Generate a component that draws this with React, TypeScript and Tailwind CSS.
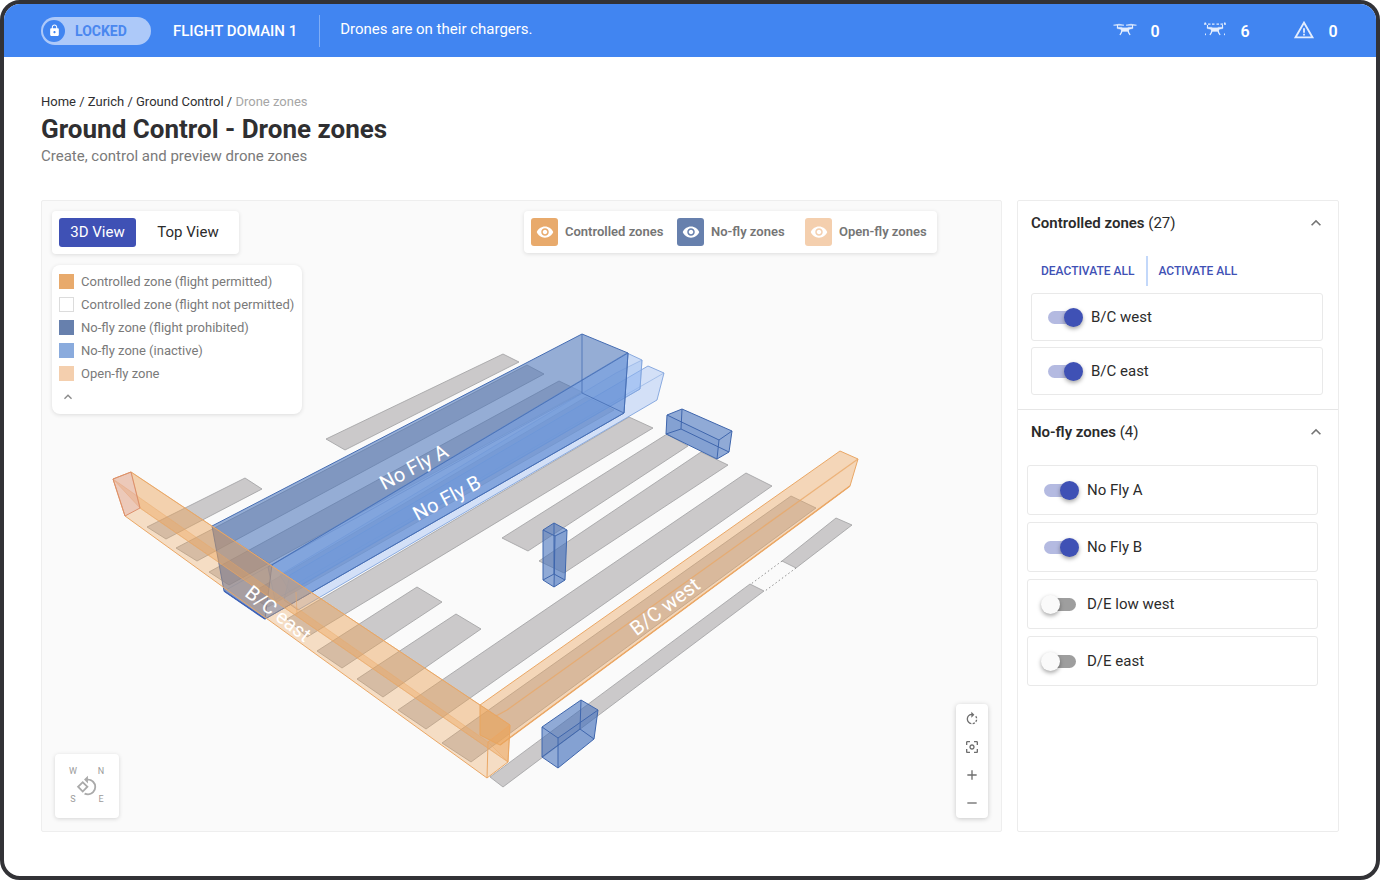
import { useState } from "react";
import type { ReactNode } from "react";
import {
  MdAdd,
  MdCenterFocusWeak,
  MdKeyboardArrowUp,
  MdLock,
  MdRemove,
  MdRotate90DegreesCcw,
  MdRotateRight,
  MdVisibility,
  MdWarningAmber,
} from "react-icons/md";

function DroneIcon({ flying = false }: { flying?: boolean }) {
  return (
    <svg viewBox="0 0 24 24" className="size-6" fill="#e3edfe" stroke="#e3edfe" aria-hidden="true">
      {flying ? (
        <path d="M1 6.200h2.500M5 6.200h2.500M9 6.200h2.500M13.500 6.200h2.500M17.500 6.200h2.500M21 6.200h2M1.500 5h1.500M21 5h1.500" fill="none" strokeWidth="1.200" />
      ) : (
        <path d="M.5 7.200L6 6.200l5 1zM13 7.200l5-1 5.500 1z" strokeWidth=".6" strokeLinejoin="round" />
      )}
      <path d="M4.500 7v3M19.500 7v3" fill="none" strokeWidth="1.100" />
      <path d="M4 9.200h4.500l1.200.6h4.600l1.200-.6H20v1.300l-3.500.8-1.600 2.200H9.100L7.500 11.300 4 10.500z" strokeWidth=".3" />
      <path d="M8.800 12.600l-.4 2-1.200 1.900M15.200 12.600l.4 2 1.200 1.900" fill="none" strokeWidth="1.400" strokeLinecap="round" />
      {flying && <path d="M2.500 15.500v1.700M21.500 15.500v1.700" fill="none" strokeWidth="1" />}
    </svg>
  );
}

function Stat({ icon, label, value }: { icon: ReactNode; label: string; value: number }) {
  return (
    <div className="flex items-center gap-3" title={label}>
      {icon}
      <span className="w-3 pt-1 text-center text-base leading-5 font-semibold">{value}</span>
    </div>
  );
}

function Header() {
  return (
    <header className="flex h-[53px] items-center bg-[#4185f1] px-[37px] text-white">
      <button type="button" className="flex h-7 w-[110px] items-center gap-2.5 rounded-full bg-[#adc9f9] px-0.5 text-sm font-bold text-[#4a87ef]">
        <span className="flex size-[22px] items-center justify-center rounded-full bg-[#4185f1] text-white">
          <MdLock className="size-[13px]" />
        </span>
        LOCKED
      </button>
      <span className="ml-[22px] border-r border-[#7fadf6] py-1.5 pr-[22px] text-[15px] leading-5 font-medium">
        FLIGHT DOMAIN 1
      </span>
      <p className="ml-5 pb-0.5 text-[15px]">Drones are on their chargers.</p>
      <div className="ml-auto flex gap-[42px] pb-0.5">
        <Stat icon={<DroneIcon />} label="Drones in standby" value={0} />
        <Stat icon={<DroneIcon flying />} label="Drones in flight" value={6} />
        <Stat icon={<MdWarningAmber className="size-[22px] text-[#e3edfe]" />} label="Warnings" value={0} />
      </div>
    </header>
  );
}

const slabs = [
  "326,439 503,354 519,362 345,450",
  "147,527 245,478 262,489 166,539",
  "176,548 527,365 544,374 197,561",
  "209,572 559,381 582,392 229,585",
  "248,595 586,397 614,410 268,607",
  "287,619 629,417 653,428 307,637",
  "502,538 667,434 688,446 528,551",
  "539,561 701,452 728,465 564,573",
  "398,710 746,473 772,486 426,729",
  "442,743 791,496 816,508 471,762",
  "782,561 836,518 852,525 796,568",
  "490,777 750,584 764,591 503,787",
  "317,651 417,587 442,602 342,668",
  "357,679 456,614 481,629 383,697",
];

const smallBoxes = [
  {
    hull: "682,409 732,431 729,452 717,459 666,434 667,415",
    lines: "M667 415L719 440L732 431M719 440L717 459M682 409L681 429L729 452M681 429L666 434",
    shade: "667,415 719,440 717,459 666,434",
  },
  {
    hull: "554,523 567,530 565,580 554,587 543,580 543,530",
    lines: "M543 530L555 536L567 530M555 536L554 587M554 523V574L565 580M554 574L543 580",
    shade: "555,536 567,530 565,580 554,587",
  },
  {
    hull: "581,700 598,710 594,739 558,768 542,757 542,727",
    lines: "M542 727L558 738L598 710M558 738V768M581 700L580 729L594 739M580 729L542 757",
    shade: "558,738 598,710 594,739 558,768",
  },
];

function ZoneMap() {
  return (
    <svg viewBox="42 201 959 630" className="block h-auto w-full" role="img" aria-label="3D map of the drone zones">
      <g fill="#cbc9ca" stroke="#a09fa1" strokeWidth=".8">
        {slabs.map((points) => (
          <polygon key={points} points={points} />
        ))}
      </g>
      <path d="M782 561L751 584M796 568L765 591" stroke="#8f8f8f" strokeDasharray="1.500 2.500" />

      {/* No Fly B */}
      <g stroke="#7fa3dd" strokeWidth=".9" fill="#8db2f0">
        <polygon points="648,366 664,373 657,400 298,610 284,600 290,575" fillOpacity=".36" />
        <path d="M664 373L296 584" fill="none" strokeOpacity=".6" />
        <polygon points="627,353 642,360 640,389 275,600 268,567" fillOpacity=".42" />
        <polygon points="616,373 642,360 640,389 290,592 280,575" fillOpacity=".25" strokeWidth=".5" />
      </g>

      {/* No Fly A */}
      <g stroke="#456db3" strokeWidth="1">
        <polygon points="212,526 582,334 628,353 624,413 265,619 224,591" fill="#4670b8" fillOpacity=".56" />
        <polygon points="272,565 628,353 624,413 265,619" fill="#86b0f2" fillOpacity=".32" strokeOpacity=".8" />
        <polygon points="212,526 272,565 265,619 224,591" fill="#4b5c8c" fillOpacity=".22" stroke="none" />
        <path d="M582 334V393L624 413" fill="none" strokeOpacity=".8" />
        <path d="M582 393L224 591" fill="none" strokeOpacity=".25" />
        <path d="M224 591L265 619" stroke="#3e62b8" strokeWidth="1.500" />
      </g>

      {smallBoxes.map((box) => (
        <g key={box.hull} stroke="#3f66ad" strokeWidth="1" fill="#4470bb">
          <polygon points={box.hull} fillOpacity=".58" />
          <polygon points={box.shade} fillOpacity=".15" stroke="none" />
          <path d={box.lines} fill="none" />
        </g>
      ))}

      {/* B/C west */}
      <g stroke="#eaa765" strokeWidth="1" fill="#eba45c">
        <polygon points="480,705 840,451 858,459 850,486 500,745 480,735" fillOpacity=".42" />
        <path d="M858 459L507 710L496 716" fill="none" strokeWidth="1.300" strokeOpacity=".75" />
        <path d="M850 486L500 745" fill="none" strokeWidth="1.500" />
        <polygon points="480,705 498,716 510,725 508,737 497,745 480,735" fillOpacity=".28" stroke="none" />
      </g>

      {/* B/C east */}
      <g stroke="#eaa765" strokeWidth="1" fill="#eba45c">
        <polygon points="113,479 131,472 510,725 508,762 487,778 125,516" fillOpacity=".34" />
        <polygon points="131,472 510,725 508,762 140,508" fillOpacity=".2" strokeOpacity=".5" />
        <polygon points="113,479 488,742 508,762 140,508" fillOpacity=".32" strokeOpacity=".4" />
        <polygon points="488,742 510,725 508,762" fillOpacity=".4" stroke="none" />
        <path d="M488 742L487 778M488 742L510 725" fill="none" />
        <path d="M296 592L297 615" fill="none" strokeOpacity=".6" />
        <polygon points="113,479 131,472 140,508 125,516" fill="#d58f9c" fillOpacity=".26" stroke="#dc8f6c" />
      </g>

      <g fill="#fff" fontSize="20" textAnchor="middle" className="font-['Roboto',sans-serif]">
        <text transform="translate(417 473) rotate(-28)">No Fly A</text>
        <text transform="translate(450 504) rotate(-28)">No Fly B</text>
        <text transform="translate(274 619) rotate(38)">B/C east</text>
        <text transform="translate(669 612) rotate(-37)">B/C west</text>
      </g>
    </svg>
  );
}

function ViewSwitch() {
  const [view, setView] = useState("3D View");
  return (
    <div className="flex gap-2 rounded-sm bg-white p-[7px] shadow-[0_1px_4px_rgba(0,0,0,0.12)]">
      {["3D View", "Top View"].map((name) => (
        <button
          key={name}
          type="button"
          aria-pressed={view === name}
          onClick={() => setView(name)}
          className={
            view === name
              ? "h-[29px] w-[77px] rounded-[3px] bg-[#3f51b5] text-[15px] text-white"
              : "h-[29px] w-[88px] rounded-[3px] text-[15px] text-[#2b2b2b]"
          }
        >
          {name}
        </button>
      ))}
    </div>
  );
}

const legend = [
  { label: "Controlled zone (flight permitted)", swatch: "bg-[#e8aa6c]" },
  { label: "Controlled zone (flight not permitted)", swatch: "border border-[#dcdcdc] bg-white" },
  { label: "No-fly zone (flight prohibited)", swatch: "bg-[#6780ad]" },
  { label: "No-fly zone (inactive)", swatch: "bg-[#8aabdd]" },
  { label: "Open-fly zone", swatch: "bg-[#f4cfae]" },
];

function Legend() {
  return (
    <div className="w-[250px] rounded-lg bg-white px-[7px] pt-[5px] pb-[7px] shadow-[0_1px_4px_rgba(0,0,0,0.12)]">
      <ul className="text-[13px] text-[#7a7a7a]">
        {legend.map(({ label, swatch }) => (
          <li key={label} className="flex h-[23px] items-center gap-[7px] whitespace-nowrap">
            <span className={`size-[15px] shrink-0 ${swatch}`} />
            {label}
          </li>
        ))}
      </ul>
      <button type="button" aria-label="Collapse legend" className="mt-0.5 ml-px flex h-5 items-center text-[#8a8a8a]">
        <MdKeyboardArrowUp className="size-4" />
      </button>
    </div>
  );
}

const filters = [
  { label: "Controlled zones", width: "w-[146px]", swatch: "bg-[#e8aa6c]" },
  { label: "No-fly zones", width: "w-[128px]", swatch: "bg-[#6780ad]" },
  { label: "Open-fly zones", width: "w-[125px]", swatch: "bg-[#f4cfae]" },
];

function ZoneFilters() {
  return (
    <div className="flex rounded-sm bg-white p-[7px] shadow-[0_1px_4px_rgba(0,0,0,0.12)]">
      {filters.map(({ label, width, swatch }) => (
        <button key={label} type="button" className={`flex items-center gap-[7px] text-[13px] font-semibold whitespace-nowrap text-[#757575] ${width}`}>
          <span className={`flex h-7 w-[27px] items-center justify-center rounded-[3px] text-white ${swatch}`}>
            <MdVisibility className="size-[18px]" />
          </span>
          {label}
        </button>
      ))}
    </div>
  );
}

const mapTools = [
  { label: "Rotate", Icon: MdRotateRight },
  { label: "Center", Icon: MdCenterFocusWeak },
  { label: "Zoom in", Icon: MdAdd },
  { label: "Zoom out", Icon: MdRemove },
];

function MapTools() {
  return (
    <div className="flex w-8 flex-col rounded-sm bg-white py-px shadow-[0_1px_5px_rgba(0,0,0,0.2)]">
      {mapTools.map(({ label, Icon }) => (
        <button key={label} type="button" aria-label={label} className="flex h-7 items-center justify-center text-[#6f6f6f]">
          <Icon className="size-4" />
        </button>
      ))}
    </div>
  );
}

function Compass() {
  return (
    <div className="grid size-16 grid-cols-3 grid-rows-3 place-items-center rounded-sm bg-white p-[11px] text-[9px] text-[#9b9b9b] shadow-[0_1px_4px_rgba(0,0,0,0.15)]">
      <span className="col-start-1 row-start-1">W</span>
      <span className="col-start-3 row-start-1">N</span>
      <MdRotate90DegreesCcw className="col-start-2 row-start-2 size-[22px] shrink-0 text-[#aaaaaa]" />
      <span className="col-start-1 row-start-3">S</span>
      <span className="col-start-3 row-start-3">E</span>
    </div>
  );
}

function ZoneSwitch({ name, on, height }: { name: string; on: boolean; height: string }) {
  return (
    <label className={`flex items-center gap-[11px] rounded-[3px] border border-[#e9e9e9] pl-4 text-[15px] text-[#2b2b2b] ${height}`}>
      <input
        type="checkbox"
        role="switch"
        defaultChecked={on}
        className="flex h-[13px] w-8 appearance-none items-center rounded-full bg-[#9e9e9e] before:size-[19px] before:shrink-0 before:-translate-x-[3px] before:rounded-full before:bg-[#fafafa] before:shadow-[0_2px_4px_rgba(0,0,0,0.35)] before:content-[''] checked:bg-[#b4bae1] checked:before:translate-x-4 checked:before:bg-[#3f51b5]"
      />
      {name}
    </label>
  );
}

function SectionTitle({ title, count }: { title: string; count: number }) {
  return (
    <h2 className="text-[15px] leading-5 text-[#2b2b2b]">
      <button type="button" aria-expanded="true" className="flex w-full items-center justify-between">
        <span>
          <span className="font-semibold">{title}</span> ({count})
        </span>
        <MdKeyboardArrowUp className="size-5 text-[#757575]" />
      </button>
    </h2>
  );
}

function Sidebar() {
  return (
    <aside className="w-[322px] shrink-0 rounded-xs border border-[#ececec]">
      <section className="border-b border-[#e6e6e6] pt-3 pr-3 pb-3.5 pl-[13px]">
        <SectionTitle title="Controlled zones" count={27} />
        <div className="mt-[23px] flex text-xs leading-[30px] font-medium text-[#3f51b5]">
          <button type="button" className="border-r-2 border-[#c3d8fa] pr-3 pl-2.5">
            DEACTIVATE ALL
          </button>
          <button type="button" className="px-2.5">
            ACTIVATE ALL
          </button>
        </div>
        <div className="mt-[7px] mr-[3px] flex flex-col gap-1.5">
          <ZoneSwitch name="B/C west" on height="h-12" />
          <ZoneSwitch name="B/C east" on height="h-12" />
        </div>
      </section>
      <section className="pt-3 pr-3 pl-[13px]">
        <SectionTitle title="No-fly zones" count={4} />
        <div className="mt-[23px] mr-2 -ml-1 flex flex-col gap-[7px]">
          <ZoneSwitch name="No Fly A" on height="h-[50px]" />
          <ZoneSwitch name="No Fly B" on height="h-[50px]" />
          <ZoneSwitch name="D/E low west" on={false} height="h-[50px]" />
          <ZoneSwitch name="D/E east" on={false} height="h-[50px]" />
        </div>
      </section>
    </aside>
  );
}

export default function App() {
  return (
    <div className="min-h-screen overflow-hidden rounded-[20px] border-4 border-[#323236] bg-white font-['Roboto',sans-serif] text-[#2f2f31]">
      <Header />
      <main className="px-[37px] pt-9 pb-11">
        <nav aria-label="Breadcrumb" className="text-[13px] leading-[18px]">
          <a href="#home">Home</a> / <a href="#zurich">Zurich</a> / <a href="#ground-control">Ground Control</a> /{" "}
          <span className="text-[#a6a6a6]">Drone zones</span>
        </nav>
        <h1 className="mt-0.5 text-[26px] leading-8 font-bold">Ground Control - Drone zones</h1>
        <p className="mt-px text-[15px] leading-5 text-[#7a7a7a]">Create, control and preview drone zones</p>

        <div className="mt-[34px] flex gap-[15px]">
          <section aria-label="Map" className="relative min-w-0 flex-1 self-start rounded-xs border border-[#eeeeee] bg-[#fafafa]">
            <ZoneMap />
            <div className="absolute top-2.5 left-2.5 flex flex-col items-start gap-[11px]">
              <ViewSwitch />
              <Legend />
            </div>
            <div className="absolute top-2.5 right-16">
              <ZoneFilters />
            </div>
            <div className="absolute bottom-[13px] left-[13px]">
              <Compass />
            </div>
            <div className="absolute right-[13px] bottom-[13px]">
              <MapTools />
            </div>
          </section>
          <Sidebar />
        </div>
      </main>
    </div>
  );
}
